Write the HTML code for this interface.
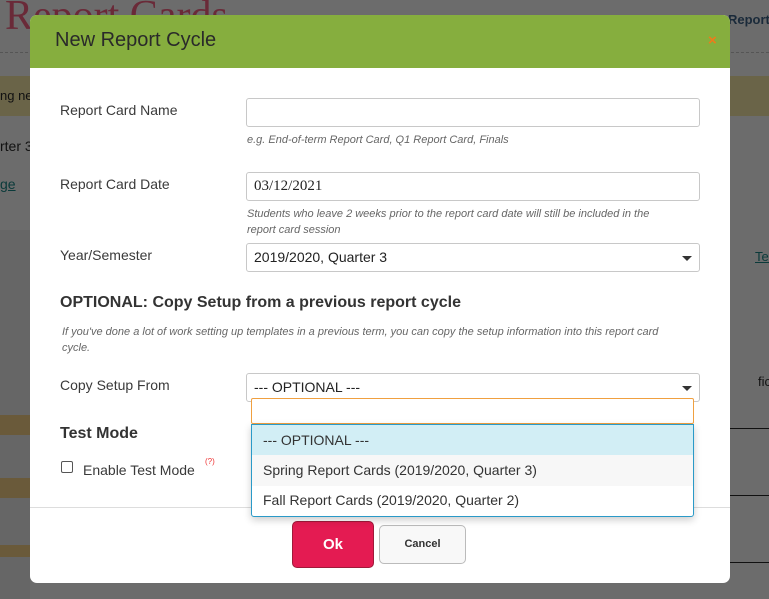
<!DOCTYPE html>
<html style="margin:0;width:769px;height:599px;overflow:hidden;background:#6c6c6c"><head><style>
*{box-sizing:border-box}
body{margin:0;width:769px;height:599px;overflow:hidden;font-family:"Liberation Sans",sans-serif;position:relative;color:#333;background:#6c6c6c}
.abs{position:absolute}
.modal{left:30px;top:15px;width:700px;height:568px;background:#fff;border-radius:7px;overflow:hidden}
.hdr{left:0;top:0;width:700px;height:53px;background:#86ae3e}
.lbl{font-size:14px;color:#3a3a3a}
.inp{border:1px solid #c8c8c8;border-radius:3px;background:#fff;height:29px}
.hint{font-size:11px;font-style:italic;color:#666;line-height:16px}
.arrow{position:absolute;right:7px;top:12px;width:0;height:0;border-left:5px solid transparent;border-right:5px solid transparent;border-top:5px solid #333}
</style></head><body>
<div class="abs" style="left:0;top:0;width:769px;height:599px;background:#6c6c6c"></div>
<div class="abs" style="left:5px;top:-8px;font-family:'Liberation Serif',serif;font-size:42px;color:#6a2a38">Report Cards</div>
<div class="abs" style="left:0;top:52px;width:769px;border-top:1px dashed #555"></div>
<div class="abs" style="left:728px;top:12px;font-size:13px;font-weight:bold;color:#1a2a3a">Report</div>
<div class="abs" style="left:0;top:76px;width:769px;height:40px;background:#6a6448"></div>
<div class="abs" style="left:0;top:88px;font-size:13px;color:#111">ng ne</div>
<div class="abs" style="left:0;top:138px;font-size:14px;color:#111">rter 3</div>
<div class="abs" style="left:0;top:176px;font-size:14px;color:#0a3a3a;text-decoration:underline">ge</div>
<div class="abs" style="left:0;top:230px;width:30px;height:380px;background:#666"></div>
<div class="abs" style="left:0;top:415px;width:30px;height:20px;background:#6a5a3a"></div>
<div class="abs" style="left:0;top:478px;width:30px;height:20px;background:#6a5a3a"></div>
<div class="abs" style="left:0;top:545px;width:30px;height:12px;background:#6a5a3a"></div>
<div class="abs" style="left:755px;top:249px;font-size:13px;color:#0a3a3a;text-decoration:underline">Templ</div>
<div class="abs" style="left:758px;top:374px;font-size:13px;color:#111">ficial</div>
<div class="abs" style="left:730px;top:428px;width:39px;border-top:1px solid #111"></div>
<div class="abs" style="left:730px;top:495px;width:39px;border-top:1px solid #111"></div>
<div class="abs" style="left:730px;top:562px;width:39px;border-top:1px solid #111"></div>

<div class="abs modal">
 <div class="abs hdr"></div>
 <div class="abs" style="left:25px;top:14px;font-size:20px;color:#2a2a2a">New Report Cycle</div>
 <div class="abs" style="left:678px;top:17px;font-size:15px;font-weight:bold;color:#f07a1a">×</div>

 <div class="abs lbl" style="left:30px;top:87px">Report Card Name</div>
 <div class="abs inp" style="left:216px;top:83px;width:454px"></div>
 <div class="abs hint" style="left:217px;top:117px">e.g. End-of-term Report Card, Q1 Report Card, Finals</div>

 <div class="abs lbl" style="left:30px;top:161px">Report Card Date</div>
 <div class="abs inp" style="left:216px;top:157px;width:454px;padding:5px 7px;font-family:'Liberation Serif',serif;font-size:15px;color:#222">03/12/2021</div>
 <div class="abs hint" style="left:217px;top:191px;width:430px">Students who leave 2 weeks prior to the report card date will still be included in the report card session</div>

 <div class="abs lbl" style="left:30px;top:232px">Year/Semester</div>
 <div class="abs inp" style="left:216px;top:228px;width:454px;padding:5px 7px;font-size:14px;color:#222">2019/2020, Quarter 3<span class="arrow"></span></div>

 <div class="abs" style="left:30px;top:279px;font-size:16px;font-weight:bold;color:#333">OPTIONAL: Copy Setup from a previous report cycle</div>
 <div class="abs hint" style="left:32px;top:309px;width:620px">If you've done a lot of work setting up templates in a previous term, you can copy the setup information into this report card cycle.</div>

 <div class="abs lbl" style="left:30px;top:362px">Copy Setup From</div>
 <div class="abs inp" style="left:216px;top:358px;width:454px;padding:5px 7px;font-size:14px;color:#222">--- OPTIONAL ---<span class="arrow"></span></div>

 <div class="abs" style="left:30px;top:410px;font-size:16px;font-weight:bold;color:#333">Test Mode</div>
 <div class="abs" style="left:31px;top:446px;width:12px;height:12px;border:1px solid #555;border-radius:2px"></div>
 <div class="abs lbl" style="left:53px;top:447px">Enable Test Mode</div>
 <div class="abs" style="left:175px;top:442px;font-size:8px;color:#e33">(?)</div>

 <div class="abs" style="left:0;top:492px;width:700px;border-top:1px solid #ddd"></div>
 <div class="abs" style="left:262px;top:506px;width:82px;height:47px;border-radius:5px;background:#e41b52;border:1px solid #a01a3a;color:#fff;font-weight:bold;font-size:15px;text-align:center;line-height:45px">Ok</div>
 <div class="abs" style="left:349px;top:510px;width:87px;height:39px;border-radius:5px;background:#f8f8f8;border:1px solid #bbb;font-size:11px;font-weight:bold;color:#333;text-align:center;line-height:37px">Cancel</div>

 <div class="abs" style="left:221px;top:383px;width:443px;height:26px;border:1px solid #f0a040;border-radius:2px;background:#fff"></div>
 <div class="abs" style="left:221px;top:409px;width:443px;height:93px;border:1px solid #2a9ac8;border-radius:0 0 3px 3px;background:#fff;box-shadow:0 3px 8px rgba(0,0,0,.2);font-size:14px;color:#333">
  <div style="height:30px;background:#d2eef5;padding:7px 11px">--- OPTIONAL ---</div>
  <div style="height:31px;background:#f7f7f7;padding:7px 11px">Spring Report Cards (2019/2020, Quarter 3)</div>
  <div style="height:30px;padding:6px 11px">Fall Report Cards (2019/2020, Quarter 2)</div>
 </div>
</div>
</body></html>
